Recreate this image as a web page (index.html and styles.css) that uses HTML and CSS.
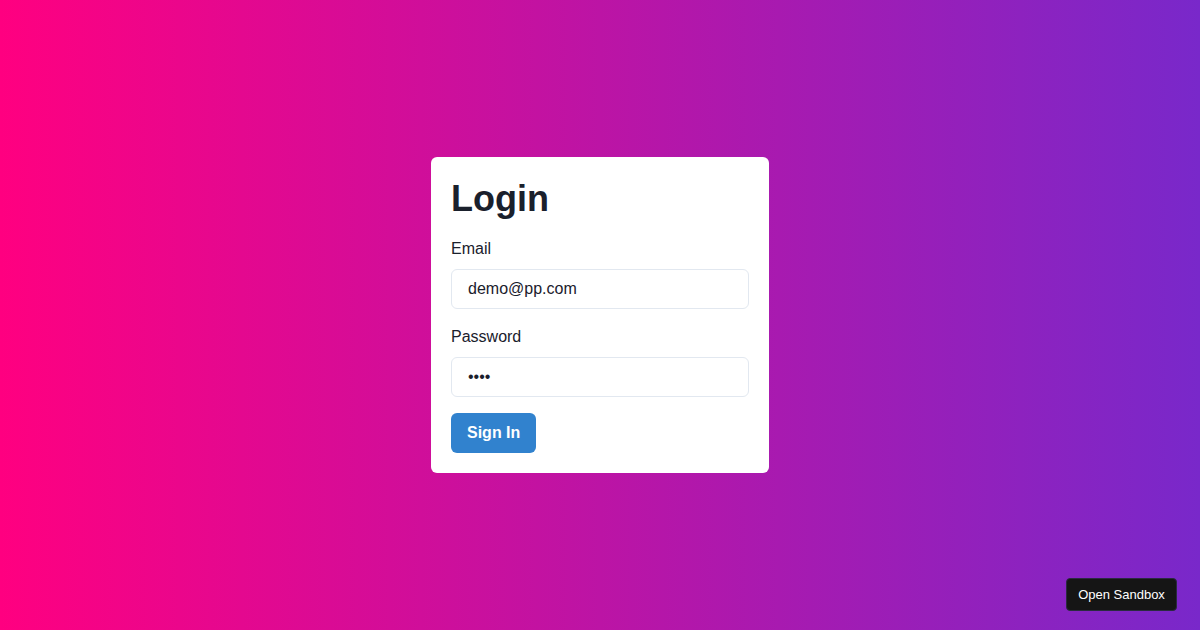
FILE: index.html
```html
<!DOCTYPE html>
<html lang="en">
<head>
<meta charset="utf-8">
<title>Login</title>
<link rel="stylesheet" href="styles.css">
</head>
<body>
<main class="page">
  <form class="card">
    <h1 class="title">Login</h1>
    <div class="field">
      <label class="label" for="email">Email</label>
      <input class="input" id="email" type="email" value="demo@pp.com">
    </div>
    <div class="field">
      <label class="label" for="pw">Password</label>
      <input class="input" id="pw" type="password" value="demo">
    </div>
    <button class="btn" type="button">Sign In</button>
  </form>
</main>
<button class="sandbox" type="button">Open Sandbox</button>
</body>
</html>
```
FILE: styles.css
```css
* { box-sizing: border-box; }
html, body { margin: 0; height: 100%; }
body {
  font-family: "Liberation Sans", Arial, sans-serif;
  color: #1a202c;
  background: linear-gradient(to right, #ff0080, #7928ca);
}
.page {
  height: 630px;
  display: flex;
  align-items: center;
  justify-content: center;
}
.card {
  width: 338px;
  background: #fff;
  border-radius: 6px;
  padding: 20px;
  display: flex;
  flex-direction: column;
}
.title {
  margin: 0 0 16px;
  font-size: 36px;
  line-height: 44px;
  font-weight: 700;
  color: #1a202c;
}
.field { margin-bottom: 16px; display: flex; flex-direction: column; }
.label {
  font-size: 16px;
  line-height: 24px;
  margin-bottom: 8px;
  color: #1a202c;
}
.input {
  height: 40px;
  width: 100%;
  border: 1px solid #e2e8f0;
  border-radius: 6px;
  padding: 0 16px;
  font-family: "Liberation Sans", Arial, sans-serif;
  font-size: 16px;
  color: #1a202c;
  background: #fff;
  outline: none;
}
.btn {
  align-self: flex-start;
  height: 40px;
  padding: 0 16px;
  border: 0;
  border-radius: 6px;
  background: #3182ce;
  color: #fff;
  font-family: "Liberation Sans", Arial, sans-serif;
  font-size: 16px;
  font-weight: 700;
}
.sandbox {
  position: fixed;
  right: 23px;
  bottom: 19px;
  height: 33px;
  width: 111px;
  padding: 0;
  background: #151515;
  color: #fff;
  border: 1px solid #2a2a40;
  border-radius: 4px;
  font-family: "Liberation Sans", Arial, sans-serif;
  font-size: 13px;
}
```
